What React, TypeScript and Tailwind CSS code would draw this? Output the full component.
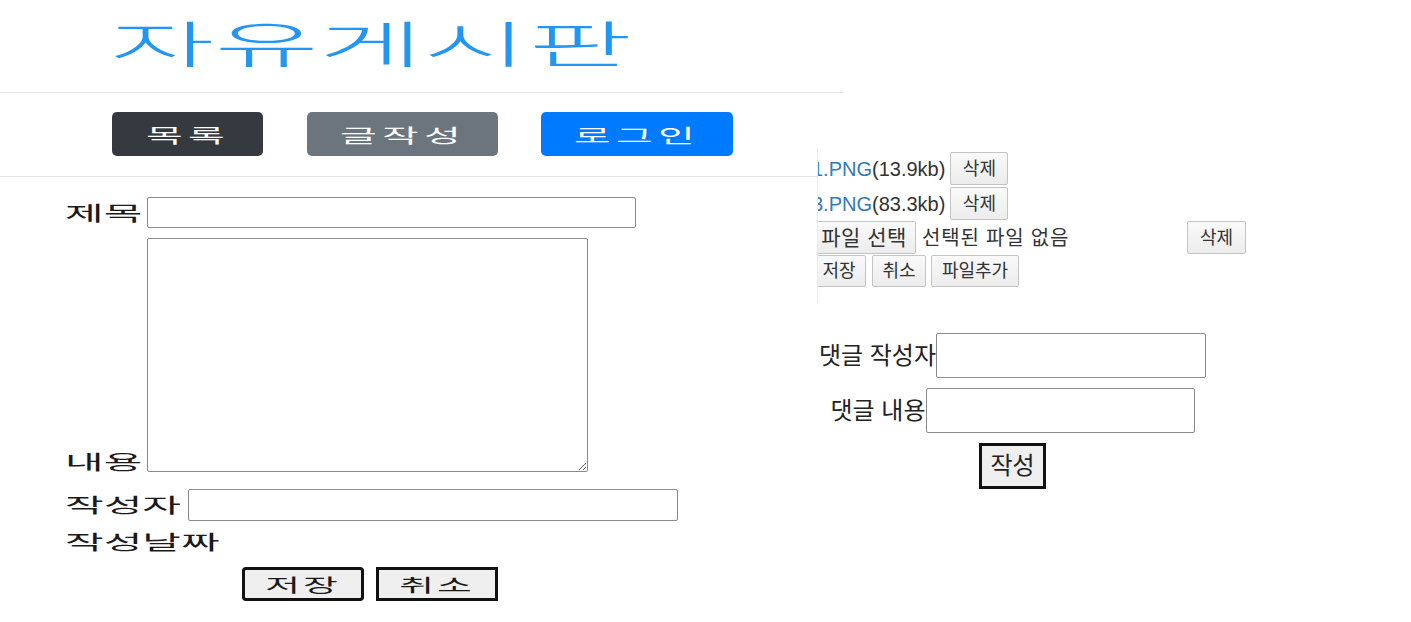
import React from "react";

function Wide({ children, className = "" }: { children: React.ReactNode; className?: string }) {
  return <span className={"inline-block whitespace-nowrap leading-none scale-x-[2.1] " + className}>{children}</span>;
}

function SmallBtn({ children, className = "" }: { children: React.ReactNode; className?: string }) {
  return (
    <button
      type="button"
      className={
        "flex shrink-0 items-center justify-center rounded-[2px] border border-[#c4c4c4] bg-gradient-to-b from-[#fafafa] to-[#ececec] text-[18px] leading-none text-[#333] " +
        className
      }
    >
      {children}
    </button>
  );
}

export default function App() {
  return (
    <div className="flex min-h-[622px] w-full items-start overflow-hidden bg-white">
      {/* left column */}
      <div className="w-[843px] shrink-0 font-['Noto_Sans_CJK_KR',sans-serif] text-[#1a1a1a]">
        <header className="h-[93px] border-b border-[#e6e6e6] pl-[110px] pt-[16px]">
          <span className="inline-block origin-left scale-x-[2.27] whitespace-nowrap text-[50px] font-light leading-none text-[#2196f3]">
            자유게시판
          </span>
        </header>
        <nav className="flex h-[84px] items-start border-b border-[#e6e6e6] pl-[112px] pt-[19px]">
          <button type="button" className="flex h-[44px] w-[151px] items-center justify-center rounded-[5px] bg-[#343a40] text-white">
            <Wide className="text-[19px] tracking-[2.5px]">목록</Wide>
          </button>
          <button type="button" className="ml-[44px] flex h-[44px] w-[191px] items-center justify-center rounded-[5px] bg-[#6c757d] text-white">
            <Wide className="text-[19px] tracking-[2.5px]">글작성</Wide>
          </button>
          <button type="button" className="ml-[43px] flex h-[44px] w-[192px] items-center justify-center rounded-[5px] bg-[#007bff] text-white">
            <Wide className="text-[19px] tracking-[2.5px]">로그인</Wide>
          </button>
        </nav>
        <form className="pl-[65px] pt-[20px]">
          <div className="flex items-center">
            <label className="w-[82px] shrink-0 text-[20px]">
              <Wide className="origin-left">제목</Wide>
            </label>
            <input className="h-[31px] w-[489px] rounded-[2px] border border-[#8a8a8a] bg-white px-1" />
          </div>
          <div className="mt-[10px] flex items-end">
            <label className="-mb-[5px] w-[82px] shrink-0 text-[20px]">
              <Wide className="origin-left">내용</Wide>
            </label>
            <textarea className="h-[234px] w-[441px] rounded-[2px] border border-[#8a8a8a] bg-white" />
          </div>
          <div className="mt-[17px] flex items-center">
            <label className="w-[123px] shrink-0 text-[20px]">
              <Wide className="origin-left">작성자</Wide>
            </label>
            <input className="h-[32px] w-[490px] rounded-[2px] border border-[#8a8a8a] bg-white px-1" />
          </div>
          <div className="flex h-[42px] items-center text-[20px]">
            <Wide className="origin-left">작성날짜</Wide>
          </div>
          <div className="ml-[177px] mt-[4px] flex gap-[12px]">
            <button type="button" className="flex h-[34px] w-[122px] items-center justify-center rounded-[4px] border-[3px] border-[#111] bg-[#efefef]">
              <Wide className="text-[18px] tracking-[1.5px]">저장</Wide>
            </button>
            <button type="button" className="flex h-[34px] w-[122px] items-center justify-center border-[3px] border-[#111] bg-[#efefef]">
              <Wide className="text-[18px] tracking-[1.5px]">취소</Wide>
            </button>
          </div>
        </form>
      </div>

      {/* right column */}
      <div className="relative z-10 -ml-[26px] mt-[148px] shrink-0 font-['Liberation_Sans','Noto_Sans_CJK_KR',sans-serif] text-[#333]">
        <div className="w-[460px] overflow-hidden border-l border-[#ececec] bg-white pb-[16px] pt-[4px]">
          <div className="-ml-[6px]">
            <div className="flex h-[33px] items-center text-[20px]">
              <span className="whitespace-nowrap">
                <span className="text-[#337ab7]">1.PNG</span>(13.9kb)
              </span>
              <SmallBtn className="ml-[5px] h-[33px] w-[58px]">삭제</SmallBtn>
            </div>
            <div className="mt-[2px] flex h-[33px] items-center text-[20px]">
              <span className="whitespace-nowrap">
                <span className="text-[#337ab7]">3.PNG</span>(83.3kb)
              </span>
              <SmallBtn className="ml-[5px] h-[33px] w-[58px]">삭제</SmallBtn>
            </div>
            <div className="mt-[1px] flex h-[33px] items-center">
              <SmallBtn className="h-[33px] w-[104px] text-[21px] tracking-[0.5px]">파일 선택</SmallBtn>
              <span className="ml-[6px] w-[265px] whitespace-nowrap text-[20px] tracking-[0.8px]">선택된 파일 없음</span>
              <SmallBtn className="h-[33px] w-[59px]">삭제</SmallBtn>
            </div>
            <div className="mt-[1px] flex h-[32px] items-center">
              <SmallBtn className="h-[32px] w-[54px]">저장</SmallBtn>
              <SmallBtn className="ml-[6px] h-[32px] w-[54px]">취소</SmallBtn>
              <SmallBtn className="ml-[5px] h-[32px] w-[88px]">파일추가</SmallBtn>
            </div>
          </div>
        </div>

        <div className="mt-[30px] flex w-[391px] flex-col items-center gap-[10px] text-[#222]">
          <div className="flex items-center">
            <span className="whitespace-nowrap text-[24px] leading-none">댓글 작성자</span>
            <input className="h-[45px] w-[270px] rounded-[2px] border border-[#8a8a8a] bg-white px-1" />
          </div>
          <div className="flex items-center">
            <span className="whitespace-nowrap text-[24px] leading-none">댓글 내용</span>
            <input className="h-[45px] w-[269px] rounded-[2px] border border-[#8a8a8a] bg-white px-1" />
          </div>
          <button type="button" className="flex h-[46px] w-[67px] items-center justify-center border-[3px] border-[#111] bg-[#efefef] text-[24px] leading-none text-[#222]">
            작성
          </button>
        </div>
      </div>
    </div>
  );
}
